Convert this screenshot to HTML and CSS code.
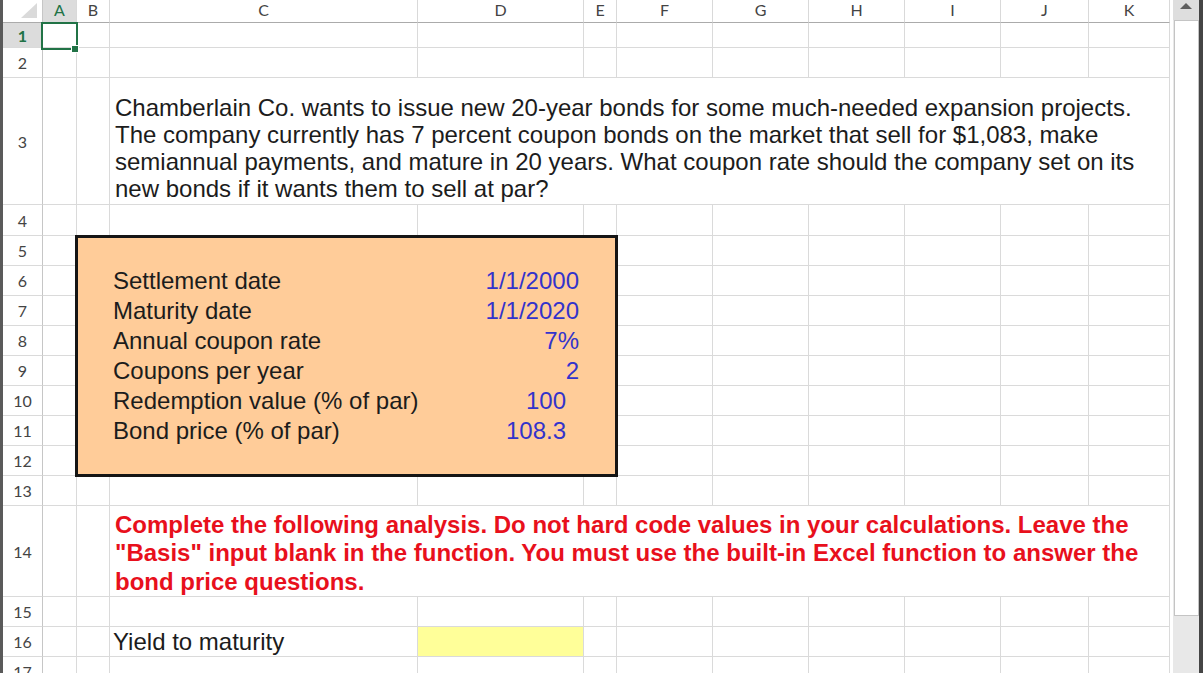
FILE: index.html
```html
<!DOCTYPE html>
<html lang="en">
<head>
<meta charset="utf-8">
<title>Chamberlain Co. bonds</title>
<link rel="stylesheet" href="styles.css">
</head>
<body>
<div class="app">
  <div class="edge-l"></div>
  <div class="sheet">
    <div class="grid">
      <!-- header -->
      <div class="ch corner"><span class="tri"></span></div>
      <div class="ch selh">A</div><div class="ch">B</div><div class="ch">C</div><div class="ch">D</div><div class="ch">E</div><div class="ch">F</div><div class="ch">G</div><div class="ch">H</div><div class="ch">I</div><div class="ch">J</div><div class="ch">K</div>
      <!-- row 1 -->
      <div class="rh selh">1</div><div class="c a1"><span class="selbox"></span><span class="handle"></span></div><div class="c"></div><div class="c"></div><div class="c"></div><div class="c"></div><div class="c"></div><div class="c"></div><div class="c"></div><div class="c"></div><div class="c"></div><div class="c"></div>
      <!-- row 2 -->
      <div class="rh">2</div><div class="c"></div><div class="c"></div><div class="c"></div><div class="c"></div><div class="c"></div><div class="c"></div><div class="c"></div><div class="c"></div><div class="c"></div><div class="c"></div><div class="c"></div>
      <!-- row 3 -->
      <div class="rh">3</div><div class="c"></div><div class="c"></div>
      <div class="c wide question">Chamberlain Co. wants to issue new 20-year bonds for some much-needed expansion projects. The company currently has 7 percent coupon bonds on the market that sell for $1,083, make semiannual payments, and mature in 20 years. What coupon rate should the company set on its new bonds if it wants them to sell at par?</div>
      <!-- row 4 -->
      <div class="rh">4</div><div class="c"></div><div class="c"></div><div class="c"></div><div class="c"></div><div class="c"></div><div class="c"></div><div class="c"></div><div class="c"></div><div class="c"></div><div class="c"></div><div class="c"></div>
      <!-- input box B5:E12 -->
      <div class="box">
        <div class="lbl">Settlement date</div><div class="val">1/1/2000</div>
        <div class="lbl">Maturity date</div><div class="val">1/1/2020</div>
        <div class="lbl">Annual coupon rate</div><div class="val">7%</div>
        <div class="lbl">Coupons per year</div><div class="val">2</div>
        <div class="lbl">Redemption value (% of par)</div><div class="val mid">100</div>
        <div class="lbl">Bond price (% of par)</div><div class="val mid">108.3</div>
      </div>
      <!-- rows 5-12 -->
      <div class="rh">5</div><div class="c"></div><div class="c"></div><div class="c"></div><div class="c"></div><div class="c"></div><div class="c"></div><div class="c"></div>
      <div class="rh">6</div><div class="c"></div><div class="c"></div><div class="c"></div><div class="c"></div><div class="c"></div><div class="c"></div><div class="c"></div>
      <div class="rh">7</div><div class="c"></div><div class="c"></div><div class="c"></div><div class="c"></div><div class="c"></div><div class="c"></div><div class="c"></div>
      <div class="rh">8</div><div class="c"></div><div class="c"></div><div class="c"></div><div class="c"></div><div class="c"></div><div class="c"></div><div class="c"></div>
      <div class="rh">9</div><div class="c"></div><div class="c"></div><div class="c"></div><div class="c"></div><div class="c"></div><div class="c"></div><div class="c"></div>
      <div class="rh">10</div><div class="c"></div><div class="c"></div><div class="c"></div><div class="c"></div><div class="c"></div><div class="c"></div><div class="c"></div>
      <div class="rh">11</div><div class="c"></div><div class="c"></div><div class="c"></div><div class="c"></div><div class="c"></div><div class="c"></div><div class="c"></div>
      <div class="rh">12</div><div class="c"></div><div class="c"></div><div class="c"></div><div class="c"></div><div class="c"></div><div class="c"></div><div class="c"></div>
      <!-- row 13 -->
      <div class="rh">13</div><div class="c"></div><div class="c"></div><div class="c"></div><div class="c"></div><div class="c"></div><div class="c"></div><div class="c"></div><div class="c"></div><div class="c"></div><div class="c"></div><div class="c"></div>
      <!-- row 14 -->
      <div class="rh">14</div><div class="c"></div><div class="c"></div>
      <div class="c wide note">Complete the following analysis. Do not hard code values in your calculations. Leave the "Basis" input blank in the function. You must use the built-in Excel function to answer the bond price questions.</div>
      <!-- row 15 -->
      <div class="rh">15</div><div class="c"></div><div class="c"></div><div class="c"></div><div class="c"></div><div class="c"></div><div class="c"></div><div class="c"></div><div class="c"></div><div class="c"></div><div class="c"></div><div class="c"></div>
      <!-- row 16 -->
      <div class="rh">16</div><div class="c"></div><div class="c"></div><div class="c text">Yield to maturity</div><div class="c input"></div><div class="c"></div><div class="c"></div><div class="c"></div><div class="c"></div><div class="c"></div><div class="c"></div><div class="c"></div>
      <!-- row 17 -->
      <div class="rh">17</div><div class="c"></div><div class="c"></div><div class="c"></div><div class="c"></div><div class="c"></div><div class="c"></div><div class="c"></div><div class="c"></div><div class="c"></div><div class="c"></div><div class="c"></div>
    </div>
  </div>
  <div class="gap"></div>
  <div class="vscroll">
    <div class="up"><span class="arrow"></span></div>
    <div class="thumb"></div>
    <div class="track"></div>
  </div>
  <div class="edge-r"></div>
</div>
</body>
</html>
```

FILE: styles.css
```css
* { box-sizing: border-box; }

body {
  margin: 0;
  background: #ffffff;
}

.app {
  display: flex;
  width: 1203px;
  height: 673px;
  overflow: hidden;
  background: #ffffff;
}

.edge-l {
  flex: none;
  width: 3px;
  background: #5a5a5a;
}

.edge-r {
  flex: none;
  width: 4px;
  background: #454545;
}

.sheet {
  flex: none;
  width: 1167px;
  height: 673px;
  overflow: hidden;
}

.gap {
  flex: none;
  width: 3px;
}

.grid {
  display: grid;
  grid-template-columns: 40px 34px 33px 308px 166px 33px 96px 96px 96px 96px 88px 81px;
  grid-template-rows: 23px 25px 30px 127px 31px repeat(9, 30px) 91px 30px 30px 30px;
  font-family: "Liberation Sans", Arial, sans-serif;
  font-size: 24px;
  color: #1c1c1c;
}

/* column headers */
.ch {
  display: flex;
  justify-content: center;
  align-items: flex-start;
  font-family: Lato, "Noto Sans", sans-serif;
  font-size: 16px;
  line-height: 19px;
  color: #444444;
  border-right: 1px solid #d9d9d9;
  border-bottom: 1px solid #ababab;
  background: #ffffff;
}

.corner {
  position: relative;
  border-right: 1px solid #c6c6c6;
}

.tri {
  position: absolute;
  right: 5px;
  bottom: 4px;
  width: 16px;
  height: 15px;
  background: #dadada;
  clip-path: polygon(100% 0, 100% 100%, 0 100%);
}

/* row headers */
.rh {
  display: flex;
  justify-content: center;
  align-items: center;
  font-family: Lato, "Noto Sans", sans-serif;
  font-size: 16px;
  color: #444444;
  border-right: 1px solid #c6c6c6;
  border-bottom: 1px solid #dadada;
  background: #ffffff;
}

.selh {
  background: #dcdcdc;
  color: #217346;
  font-weight: 700;
}

.ch.selh {
  font-weight: 400;
}

/* cells */
.c {
  border-right: 1px solid #dadada;
  border-bottom: 1px solid #dadada;
  background: #ffffff;
}

.a1 {
  position: relative;
}

.selbox {
  position: absolute;
  left: -2px;
  top: -1px;
  width: 37px;
  height: 28px;
  border: 2px solid #217346;
  z-index: 2;
}

.handle {
  position: absolute;
  left: 28px;
  top: 22px;
  width: 8px;
  height: 8px;
  background: #217346;
  border: 1px solid #ffffff;
  z-index: 3;
}

.wide {
  grid-column: span 9;
  display: flex;
  align-items: flex-end;
  padding-left: 5px;
}

.question {
  line-height: 27px;
  padding-bottom: 2px;
  padding-right: 8px;
}

.note {
  color: #e8101c;
  font-weight: 700;
  line-height: 28.5px;
  padding-bottom: 0;
  padding-right: 8px;
}

.text {
  display: flex;
  align-items: center;
  padding-left: 3px;
  white-space: nowrap;
}

.input {
  background: #ffff99;
}

/* input box */
.box {
  grid-column: 3 / 7;
  grid-row: 6 / 14;
  margin: -1px -1px -1px -2px;
  border: 3px solid #151515;
  background: #ffcc99;
  position: relative;
  z-index: 1;
  display: grid;
  grid-template-columns: 308px 166px;
  grid-template-rows: repeat(6, 30px);
  align-content: start;
  padding: 28px 0 0 32px;
}

.lbl {
  display: flex;
  align-items: center;
  padding-left: 3px;
  white-space: nowrap;
}

.val {
  display: flex;
  align-items: center;
  justify-content: flex-end;
  padding-right: 5px;
  color: #3333cc;
  white-space: nowrap;
}

.val.mid {
  padding-right: 18px;
}

/* vertical scrollbar */
.vscroll {
  flex: none;
  width: 26px;
  display: flex;
  flex-direction: column;
  background: #e8e8e8;
}

.up {
  flex: none;
  height: 20px;
  background: #dedede;
  display: flex;
  justify-content: center;
  align-items: flex-start;
  padding-top: 3px;
}

.arrow {
  width: 0;
  height: 0;
  border-left: 6px solid transparent;
  border-right: 6px solid transparent;
  border-bottom: 6px solid #5f5f5f;
}

.thumb {
  flex: none;
  height: 596px;
  margin-left: 1px;
  background: #ffffff;
  border: 1px solid #c4c4c4;
}

.track {
  flex: 1;
  background: #e8e8e8;
}
```
